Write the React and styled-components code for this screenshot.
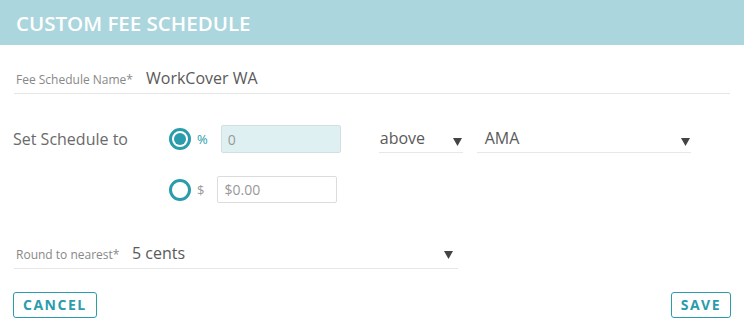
import React from 'react';
import styled, { createGlobalStyle } from 'styled-components';

const GlobalStyle = createGlobalStyle`
  html, body {
    margin: 0;
    padding: 0;
    background: #fff;
  }
  body {
    font-family: 'Open Sans', 'Noto Sans', sans-serif;
    -webkit-font-smoothing: antialiased;
  }
  * {
    box-sizing: border-box;
  }
`;

const teal = '#2a9cab';

const Page = styled.div`
  width: 744px;
  height: 334px;
  overflow: hidden;
`;

const Header = styled.header`
  height: 45px;
  background: #abd6dd;
  display: flex;
  align-items: center;
  padding-left: 16px;
`;

const Title = styled.h1`
  margin: 0;
  color: #fff;
  font-size: 20.5px;
  font-weight: 600;
  letter-spacing: 0;
  line-height: 1;
  padding-top: 1px;
`;

const FieldRow = styled.div`
  display: flex;
  align-items: baseline;
  height: 30px;
  line-height: 29px;
  margin: ${(p) => p.$margin || '0'};
  width: ${(p) => p.$width};
  border-bottom: 1px solid #e7e7e7;
  padding-left: 2px;
`;

const SmallLabel = styled.span`
  font-size: 12px;
  color: #888;
  width: ${(p) => p.$width};
  flex-shrink: 0;
`;

const Value = styled.span`
  font-size: 16px;
  color: #5a5a5a;
  flex: 1;
`;

const Schedule = styled.div`
  display: flex;
  align-items: flex-start;
  margin-top: 31px;
  padding-left: 13px;
`;

const SectionLabel = styled.div`
  width: 156px;
  height: 28px;
  line-height: 28px;
  font-size: 16px;
  color: #6a6a6a;
  flex-shrink: 0;
`;

const Options = styled.div`
  display: flex;
  flex-direction: column;
  gap: 23px;
`;

const OptionRow = styled.div`
  display: flex;
  align-items: center;
`;

const Radio = styled.span`
  width: 22px;
  height: 22px;
  border-radius: 50%;
  border: 3px solid ${teal};
  display: flex;
  align-items: center;
  justify-content: center;
  flex-shrink: 0;

  &::after {
    content: '';
    width: 12px;
    height: 12px;
    border-radius: 50%;
    background: ${(p) => (p.$checked ? teal : 'transparent')};
  }
`;

const Unit = styled.span`
  font-size: 13px;
  margin-left: 6px;
  margin-right: 13px;
  color: ${(p) => (p.$active ? teal : '#999')};
`;

const Input = styled.div`
  width: 120px;
  height: ${(p) => (p.$filled ? '28px' : '27px')};
  border: 1px solid ${(p) => (p.$filled ? '#d3dfe2' : '#dcdcdc')};
  border-radius: 2px;
  background: ${(p) => (p.$filled ? '#dff0f3' : '#fff')};
  font-size: 14px;
  color: #999;
  display: flex;
  align-items: center;
  padding-left: 6px;
`;

const Select = styled.div`
  display: flex;
  height: 28px;
  line-height: 27px;
  width: ${(p) => p.$width};
  margin-left: ${(p) => p.$gap};
  border-bottom: 1px solid #e7e7e7;
  font-size: 16px;
  color: #5a5a5a;
  padding-left: ${(p) => p.$pad || '1px'};
  padding-right: 1px;
`;

const SelectText = styled.span`
  flex: 1;
`;

const Arrow = styled.svg`
  width: 9px;
  height: 8px;
  margin-top: ${(p) => p.$top || '13px'};
  flex-shrink: 0;
`;

const Caret = ({ top }) => (
  <Arrow $top={top} viewBox="0 0 9 8">
    <path d="M0 0H9L4.5 8Z" fill="#444" />
  </Arrow>
);

const Buttons = styled.div`
  display: flex;
  justify-content: space-between;
  margin: 23px 13px 0;
`;

const Button = styled.button`
  height: 26px;
  padding: 0 9px;
  border: 1px solid ${teal};
  border-radius: 3px;
  background: #fff;
  color: ${teal};
  font-family: inherit;
  font-size: 14px;
  font-weight: 700;
  letter-spacing: 1.5px;
  line-height: 24px;
  cursor: pointer;
`;

export default function App() {
  return (
    <Page>
      <GlobalStyle />
      <Header>
        <Title>CUSTOM FEE SCHEDULE</Title>
      </Header>

      <FieldRow $margin="19px 14px 0">
        <SmallLabel $width="130px">Fee Schedule Name*</SmallLabel>
        <Value>WorkCover WA</Value>
      </FieldRow>

      <Schedule>
        <SectionLabel>Set Schedule to</SectionLabel>
        <Options>
          <OptionRow>
            <Radio $checked />
            <Unit $active>%</Unit>
            <Input $filled>0</Input>
            <Select $width="84px" $gap="38px">
              <SelectText>above</SelectText>
              <Caret />
            </Select>
            <Select $width="214px" $gap="14px" $pad="8px">
              <SelectText>AMA</SelectText>
              <Caret />
            </Select>
          </OptionRow>
          <OptionRow>
            <Radio />
            <Unit>$</Unit>
            <Input>$0.00</Input>
          </OptionRow>
        </Options>
      </Schedule>

      <FieldRow $margin="36px 0 0 14px" $width="444px">
        <SmallLabel $width="116px">Round to nearest*</SmallLabel>
        <Value>5 cents</Value>
        <Caret top="9px" />
        <span style={{ width: '5px' }} />
      </FieldRow>

      <Buttons>
        <Button>CANCEL</Button>
        <Button>SAVE</Button>
      </Buttons>
    </Page>
  );
}
